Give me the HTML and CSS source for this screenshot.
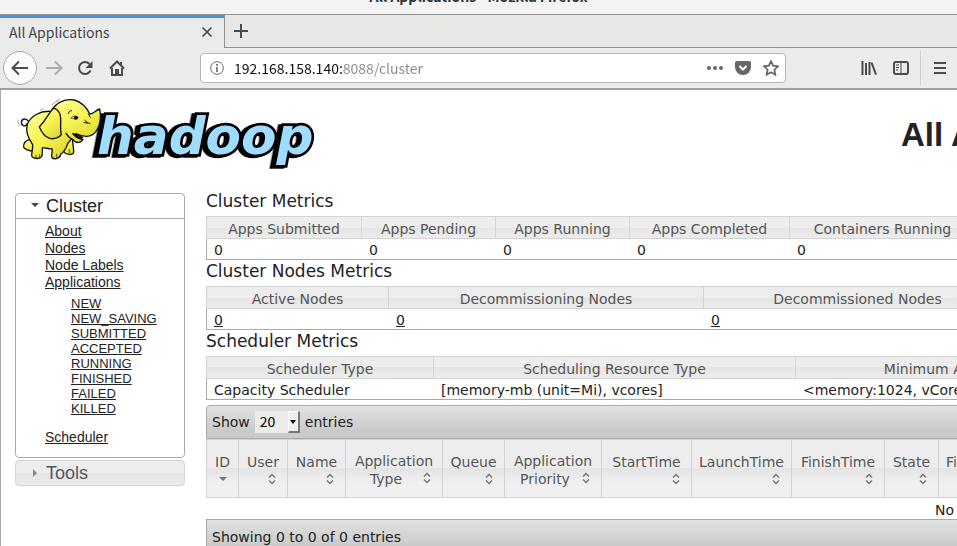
FILE: index.html
```html
<!DOCTYPE html>
<html lang="en">
<head>
<meta charset="utf-8">
<title>All Applications</title>
<link rel="stylesheet" href="styles.css">
</head>
<body>
<header class="browser">
  <div class="titlebar"><span>All Applications - Mozilla Firefox</span></div>
  <div class="tabs">
    <div class="tab">
      <span>All Applications</span>
      <button class="plain" aria-label="Close tab"><svg width="12" height="12" viewBox="0 0 12 12"><path d="M1.500 1.500 10.500 10.500M10.500 1.500 1.500 10.500" stroke-width="1.700"/></svg></button>
    </div>
    <div class="tabstrip"><button class="plain" aria-label="New tab"><svg width="16" height="16" viewBox="0 0 16 16"><path d="M8 1V15M1 8H15"/></svg></button></div>
  </div>
  <nav class="toolbar">
    <button class="plain back" aria-label="Back"><svg width="18" height="16" viewBox="0 0 18 16"><path d="M8 1.500 1.500 8 8 14.500M2 8H17"/></svg></button>
    <button class="plain forward" aria-label="Forward"><svg width="18" height="16" viewBox="0 0 18 16"><path d="M10 1.500 16.500 8 10 14.500M16 8H1"/></svg></button>
    <button class="plain reload" aria-label="Reload"><svg width="16" height="16" viewBox="0 0 16 16"><path d="M13.500 10.500A6 6 0 1 1 12.500 4"/><path class="solid" d="M15.500 1V8H8.500Z"/></svg></button>
    <button class="plain home" aria-label="Home"><svg width="16" height="16" viewBox="0 0 16 16"><path d="M1 8.500 8 1.500 15 8.500M3 8V15H13V8"/><path class="solid" d="M6 15V9H10V15ZM11 2H13V6L11 4Z"/></svg></button>
    <div class="urlbar">
      <svg width="14" height="14" viewBox="0 0 14 14"><circle cx="7" cy="7" r="6.300" stroke-width="1"/><path d="M7 6V11M7 3V5" stroke-width="1.600"/></svg>
      <input class="url" type="text" aria-label="Address" value="192.168.158.140:8088/cluster">
      <button class="plain" aria-label="Page actions"><svg width="16" height="16" viewBox="0 0 16 16"><g class="solid"><circle cx="2" cy="8" r="2"/><circle cx="8" cy="8" r="2"/><circle cx="14" cy="8" r="2"/></g></svg></button>
      <button class="plain" aria-label="Save to Pocket"><svg width="16" height="16" viewBox="0 0 16 16"><path class="solid" d="M2 1H14Q16 1 16 3V7A8 8 0 0 1 0 7V3Q0 1 2 1Z"/><path d="M4.500 6 8 9.500 11.500 6" stroke="#fff"/></svg></button>
      <button class="plain" aria-label="Bookmark"><svg width="16" height="16" viewBox="0 0 16 16"><path d="M8 1.200 10.100 5.700 15 6.300 11.400 9.700 12.300 14.700 8 12.300 3.700 14.700 4.600 9.700 1 6.300 5.900 5.700Z" stroke-width="1.800"/></svg></button>
    </div>
    <button class="plain library" aria-label="Library"><svg width="16" height="16" viewBox="0 0 16 16"><path d="M1.500 1V15M5 3V15M8.500 2V15M10.500 2.500 15 14.700"/></svg></button>
    <button class="plain sidebar-toggle" aria-label="Sidebars"><svg width="16" height="14" viewBox="0 0 16 14"><rect x="1" y="1" width="14" height="12" rx="2"/><path d="M8 1V13M3 4H6M3 6.500H6M3 9H5" stroke-width="1"/></svg></button>
    <button class="plain menu" aria-label="Menu"><svg width="12" height="12" viewBox="0 0 12 12"><path d="M0 1H12M0 6H12M0 11H12"/></svg></button>
  </nav>
</header>
<div class="page">
  <div class="masthead">
    <a class="logo" href="#" aria-label="hadoop">
      <svg width="330" height="90" viewBox="0 0 990 270">
        <defs><linearGradient id="skin" x1="0" y1="0" x2=".7" y2="1"><stop offset="0" stop-color="#ffff9c"/><stop offset=".55" stop-color="#f7f352"/><stop offset="1" stop-color="#e0d832"/></linearGradient></defs>
        <text class="word" x="291" y="193">hadoop</text>
        <g stroke="#111" stroke-width="4" stroke-linejoin="round" stroke-linecap="round" fill="url(#skin)">
          <path d="M88 99C82 84 66 83 64 97C64 108 78 112 80 102" fill="none"/>
          <path d="M90 149C78 149 69 160 71 172C79 183 95 182 103 185L120 160Z"/>
          <path d="M190 181C193 194 214 196 220 190C224 178 216 162 218 145L190 150Z"/>
          <path d="M151 64C121 62 91 78 82 103C75 126 85 145 98 164C99 183 92 194 96 200C106 208 120 207 125 199C130 190 124 178 128 173C137 173 148 178 156 176C159 187 152 194 156 203C166 210 181 204 182 193C190 187 199 175 203 161L218 142L210 95Z"/>
          <path d="M155 61C169 37 195 25 223 30C247 37 261 54 269 72C283 72 284 62 299 57C304 77 302 109 285 128C270 144 247 140 227 131C230 140 239 150 249 148C244 159 228 162 218 148C210 145 203 138 198 130"/>
          <path d="M155 61C142 76 134 95 118 110C123 123 133 140 149 145C162 149 181 142 184 133C180 120 183 104 182 87C182 73 175 60 164 55C160 54 157 57 155 61Z"/>
          <path d="M218 131C227 142 239 148 248 142C238 139 227 134 218 131Z" fill="#291b13"/>
          <path d="M205 71C206 65 210 62 215 62M253 98 270 100M255 91 263 98M265 72 271 82" fill="none" stroke-width="3"/>
          <path d="M157 44C164 35 171 34 176 34M170 31 178 28M55 90C52 98 57 101 58 106M121 61 130 56" fill="none" stroke="#777" stroke-width="2"/>
          <path d="M214 84Q223 73 235 83Q226 91 214 84Z" fill="#fff" stroke-width="2"/><circle cx="228" cy="83" r="4" fill="#111"/>
          <path d="M119 194V203M108 196V203M170 193V203M208 178V188" stroke-width="2"/>
        </g>
      </svg>
    </a>
    <h1>All Applications</h1>
  </div>
  <div class="columns">
    <aside class="side">
      <section class="panel">
        <h3 class="panel-title"><svg width="10" height="6" viewBox="0 0 10 6"><path class="solid" d="M1 0H9L5 4Z"/></svg>Cluster</h3>
        <ul class="links">
          <li><a href="#">About</a></li>
          <li><a href="#">Nodes</a></li>
          <li><a href="#">Node Labels</a></li>
          <li><a href="#">Applications</a>
            <ul class="states">
              <li><a href="#">NEW</a></li>
              <li><a href="#">NEW_SAVING</a></li>
              <li><a href="#">SUBMITTED</a></li>
              <li><a href="#">ACCEPTED</a></li>
              <li><a href="#">RUNNING</a></li>
              <li><a href="#">FINISHED</a></li>
              <li><a href="#">FAILED</a></li>
              <li><a href="#">KILLED</a></li>
            </ul>
          </li>
          <li><a href="#">Scheduler</a></li>
        </ul>
      </section>
      <h3 class="panel-title closed"><svg width="10" height="8" viewBox="0 0 10 8"><path class="solid" d="M3 0V8L7 4Z"/></svg>Tools</h3>
    </aside>
    <main class="content">
      <h2>Cluster Metrics</h2>
      <table class="metrics">
        <colgroup><col class="w155"><col class="w134"><col class="w134"><col class="w160"><col class="w186"><col></colgroup>
        <thead><tr><th>Apps Submitted</th><th>Apps Pending</th><th>Apps Running</th><th>Apps Completed</th><th>Containers Running</th><th>Memory Used</th></tr></thead>
        <tbody><tr><td>0</td><td>0</td><td>0</td><td>0</td><td>0</td><td>0 B</td></tr></tbody>
      </table>
      <h2>Cluster Nodes Metrics</h2>
      <table class="metrics">
        <colgroup><col class="w182"><col class="w315"><col class="w308"><col></colgroup>
        <thead><tr><th>Active Nodes</th><th>Decommissioning Nodes</th><th>Decommissioned Nodes</th><th>Lost Nodes</th></tr></thead>
        <tbody><tr><td><a href="#">0</a></td><td><a href="#">0</a></td><td><a href="#">0</a></td><td><a href="#">0</a></td></tr></tbody>
      </table>
      <h2>Scheduler Metrics</h2>
      <table class="metrics">
        <colgroup><col class="w227"><col class="w362"><col class="w315"><col></colgroup>
        <thead><tr><th>Scheduler Type</th><th>Scheduling Resource Type</th><th>Minimum Allocation</th><th>Maximum Allocation</th></tr></thead>
        <tbody><tr><td>Capacity Scheduler</td><td>[memory-mb (unit=Mi), vcores]</td><td>&lt;memory:1024, vCores:1&gt;</td><td>&lt;memory:8192, vCores:4&gt;</td></tr></tbody>
      </table>
      <div class="bar bar-top">
        <label for="length">Show</label>
        <span class="picker"><select id="length"><option>20</option><option>40</option></select><span class="picker-arrow"><svg width="6" height="4" viewBox="0 0 6 4"><path class="solid" d="M0 0H6L3 4Z"/></svg></span></span>
        <span>entries</span>
      </div>
      <table class="apps">
        <colgroup><col class="w32"><col class="w49"><col class="w58"><col class="w97"><col class="w62"><col class="w97"><col class="w90"><col class="w100"><col class="w93"><col class="w54"><col></colgroup>
        <thead><tr>
          <th><div>ID<svg class="sort" viewBox="0 0 16 16"><path class="solid" d="M4 6H12L8 10Z"/></svg></div></th>
          <th><div>User<svg class="sort" viewBox="0 0 16 16"><path d="M5 6.500 8 3.500 11 6.500M5 9.500 8 12.500 11 9.500"/></svg></div></th>
          <th><div>Name<svg class="sort" viewBox="0 0 16 16"><path d="M5 6.500 8 3.500 11 6.500M5 9.500 8 12.500 11 9.500"/></svg></div></th>
          <th><div>Application Type<svg class="sort" viewBox="0 0 16 16"><path d="M5 6.500 8 3.500 11 6.500M5 9.500 8 12.500 11 9.500"/></svg></div></th>
          <th><div>Queue<svg class="sort" viewBox="0 0 16 16"><path d="M5 6.500 8 3.500 11 6.500M5 9.500 8 12.500 11 9.500"/></svg></div></th>
          <th><div>Application Priority<svg class="sort" viewBox="0 0 16 16"><path d="M5 6.500 8 3.500 11 6.500M5 9.500 8 12.500 11 9.500"/></svg></div></th>
          <th><div>StartTime<svg class="sort" viewBox="0 0 16 16"><path d="M5 6.500 8 3.500 11 6.500M5 9.500 8 12.500 11 9.500"/></svg></div></th>
          <th><div>LaunchTime<svg class="sort" viewBox="0 0 16 16"><path d="M5 6.500 8 3.500 11 6.500M5 9.500 8 12.500 11 9.500"/></svg></div></th>
          <th><div>FinishTime<svg class="sort" viewBox="0 0 16 16"><path d="M5 6.500 8 3.500 11 6.500M5 9.500 8 12.500 11 9.500"/></svg></div></th>
          <th><div>State<svg class="sort" viewBox="0 0 16 16"><path d="M5 6.500 8 3.500 11 6.500M5 9.500 8 12.500 11 9.500"/></svg></div></th>
          <th class="last"><div>FinalStatus</div></th>
        </tr></thead>
        <tbody><tr><td colspan="11">No data available in table</td></tr></tbody>
      </table>
      <div class="bar bar-bottom">Showing 0 to 0 of 0 entries</div>
    </main>
  </div>
</div>
</body>
</html>
```
FILE: styles.css
```css
* { box-sizing: border-box; }
html, body { margin: 0; height: 100%; }
body {
  display: flex;
  flex-direction: column;
  overflow: hidden;
  background: #fff;
  color: #222;
  font: 14px/17px "DejaVu Sans", sans-serif;
}
a { color: inherit; }
svg { display: block; flex: none; fill: none; stroke: currentColor; stroke-width: 2; }
.solid { fill: currentColor; stroke: none; }

/* browser chrome */
.browser { flex: none; font: 14px/20px "Noto Sans CJK SC", "Noto Sans", sans-serif; color: #41474a; }
.plain { display: flex; align-items: center; justify-content: center; flex: none; padding: 0; border: 0; background: none; color: #474d50; }
.titlebar {
  display: flex;
  justify-content: center;
  align-items: flex-end;
  height: 15px;
  padding-bottom: 8px;
  overflow: hidden;
  border-bottom: 1px solid #91918e;
  background: #f3f3f3;
  color: #2e3436;
  font-weight: 700;
}
.tabs { display: flex; height: 33px; }
.tab {
  display: flex;
  align-items: center;
  justify-content: space-between;
  width: 225px;
  padding: 0 11px 3px 9px;
  border-top: 3px solid #4a90d9;
  border-right: 1px solid #91918e;
  background: #ebebea;
}
.tabstrip { flex: 1; display: flex; padding-left: 8px; border-bottom: 1px solid #91918e; background: #e8e8e6; }
.toolbar { display: flex; align-items: center; height: 42px; padding: 0 0 0 3px; border-bottom: 2px solid #a09f9d; background: #ebebea; }
.back { width: 34px; height: 34px; border: 1px solid #a9a9a7; border-radius: 50%; background: #fcfcfc; }
.forward { margin-left: 8px; color: #aaa; }
.reload { margin-left: 14px; }
.home { margin-left: 16px; }
.urlbar {
  flex: none;
  display: flex;
  align-items: center;
  gap: 12px;
  width: calc(100% - 368px);
  height: 30px;
  margin-left: 75px;
  padding: 0 6px 0 9px;
  border: 1px solid #b4b4b1;
  border-radius: 4px;
  background: #fff;
  color: #666;
}
.urlbar .plain { color: #666; }
.url {
  flex: 1;
  min-width: 0;
  margin-left: -2px;
  padding: 0;
  border: 0;
  outline: 0;
  background: linear-gradient(90deg, #111 108px, #8a8a8a 108px);
  -webkit-background-clip: text;
  background-clip: text;
  color: transparent;
  font: inherit;
}
.library { margin-left: auto; }
.sidebar-toggle { margin-left: 16px; }
.menu { height: 34px; margin-left: 11px; padding: 0 11px 0 13px; border-left: 1px solid #ccc; }

/* page */
.page { flex: 1; min-width: 1844px; border-left: 1px solid #aaa; }
.masthead { display: grid; grid-template-columns: 205px 1fr; height: 103px; }
.logo { width: 330px; color: #000; text-decoration: none; }
.logo svg { margin-left: -1px; }
.word {
  font: italic 700 155px "DejaVu Sans", sans-serif;
  fill: #a0dcff;
  stroke: #000;
  stroke-width: 16px;
  stroke-linejoin: miter;
  stroke-miterlimit: 2;
  paint-order: stroke;
  filter: drop-shadow(-10px 3px 0 #000);
}
h1 { margin: 27px 0 0; text-align: center; font: 700 33px/36px "Liberation Sans", sans-serif; }
.columns { display: grid; grid-template-columns: 170px 1fr; gap: 21px; padding-left: 14px; }

/* sidebar */
.side { font-family: "Liberation Sans", sans-serif; }
.panel { min-height: 265px; border: 1px solid #aaa; border-radius: 4px; }
.panel-title {
  display: flex;
  align-items: center;
  gap: 6px;
  height: 25px;
  margin: 0;
  padding-left: 14px;
  border-bottom: 1px solid #aaa;
  font-size: 18px;
  line-height: 24px;
  font-weight: 400;
}
.panel-title svg { color: #444; }
.closed {
  height: 26px;
  margin-top: 2px;
  border: 1px solid #d3d3d3;
  border-radius: 4px;
  background: linear-gradient(#ededed 50%, #e4e4e4 50%, #ececec);
  color: #555;
}
.closed svg { color: #888; }
.links, .states { margin: 0; padding: 0; list-style: none; }
.links { padding: 4px 0 0 29px; line-height: 17px; }
.states { padding: 5px 0 13px 26px; font-size: 13px; line-height: 15px; }

/* metrics */
h2 { height: 20px; margin: 0 0 3px; font-size: 17px; line-height: 16px; font-weight: 400; }
.content { min-width: 0; }
table { width: 100%; table-layout: fixed; border-spacing: 0; }
th { font-weight: 400; color: #555; border: 1px solid #d3d3d3; border-width: 1px 1px 1px 0; }
th:first-child { border-left-width: 1px; }
.metrics { margin-bottom: 3px; border-bottom: 1px solid #aaa; }
.metrics th { height: 23px; padding: 4px 0 0; background: linear-gradient(#ededed 50%, #e4e4e4 50%, #ededed); }
.metrics td { height: 20px; padding: 2px 7px 0; line-height: 18px; }
.metrics td:first-child { border-left: 1px solid #aaa; }
.w32 { width: 33px; } .w49 { width: 49px; } .w54 { width: 54px; } .w58 { width: 58px; }
.w62 { width: 62px; } .w90 { width: 90px; } .w93 { width: 93px; } .w97 { width: 97px; }
.w100 { width: 100px; } .w134 { width: 134px; } .w155 { width: 156px; } .w160 { width: 160px; }
.w182 { width: 183px; } .w186 { width: 186px; } .w227 { width: 228px; } .w308 { width: 308px; }
.w315 { width: 315px; } .w362 { width: 362px; }

/* applications */
.bar { display: flex; align-items: center; height: 34px; padding: 0 5px; border: 1px solid #aaa; background: linear-gradient(#e2e2e2, #cacaca 75%, #cacaca); }
.bar-top { gap: 5px; margin-top: 5px; border-radius: 4px 4px 0 0; }
.bar-bottom { height: 36px; }
.picker { display: flex; height: 22px; background: #eee; }
.picker select { width: 33px; padding: 0 0 2px 5px; border: 0; appearance: none; background: #ececeb; color: #000; font: 14px/20px "Noto Sans CJK SC", sans-serif; }
.picker-arrow { display: flex; align-items: center; justify-content: center; width: 12px; border: solid; border-width: 1px 2px 2px 1px; border-color: #fff #777 #777 #fff; color: #000; }
.apps th { height: 59px; padding: 2px 7px 0; background: linear-gradient(#ededed 50%, #e4e4e4 50%, #f0f0f0 75%); vertical-align: middle; }
.apps th div { overflow: hidden; line-height: 18px; }
.apps th.last { padding-bottom: 16px; text-align: left; }
.apps td { height: 21px; padding: 3px 0 0; line-height: 18px; text-align: center; }
.sort { float: right; width: 16px; height: 16px; color: #777; stroke-width: 1.500; }
```
